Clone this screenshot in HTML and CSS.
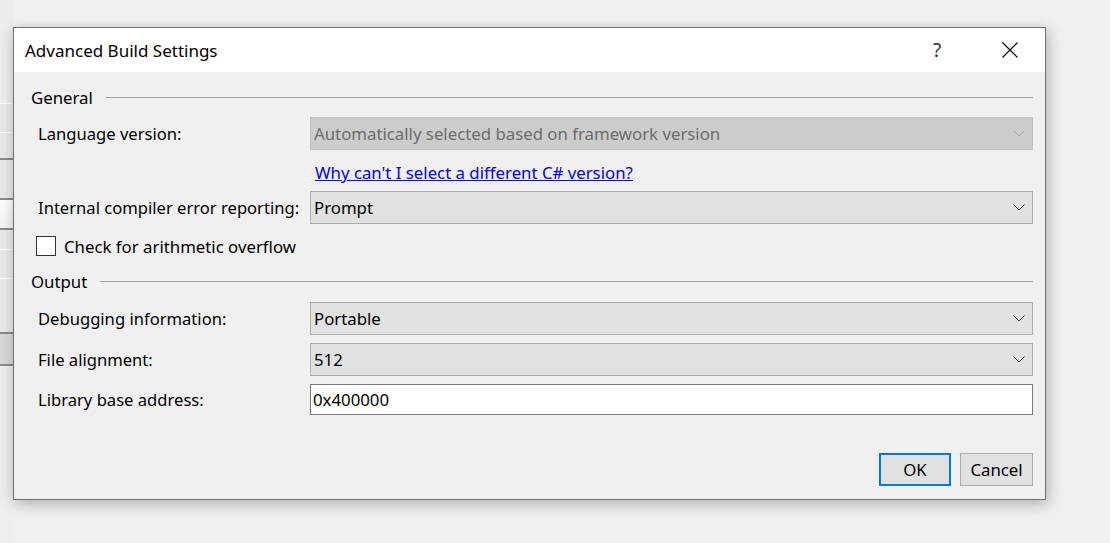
FILE: index.html
```html
<!DOCTYPE html>
<html>
<head>
<meta charset="utf-8">
<link rel="stylesheet" href="styles.css">
</head>
<body>
<div class="app">
  <div class="strip">
    <div class="band b1"></div>
    <div class="band b2 lt"></div>
    <div class="band b3 lt"></div>
    <div class="band b4 dk"></div>
    <div class="band b5 dk"></div>
    <div class="band b6 dk"></div>
    <div class="band b7 lt"></div>
    <div class="band b8 lt"></div>
    <div class="band b9 dk"></div>
    <div class="band b11"></div>
  </div>
</div>

<div class="dialog">
  <div class="titlebar">
    <div class="title">Advanced Build Settings</div>
    <div class="help">?</div>
    <div class="close">
      <svg width="16" height="16" viewBox="0 0 16 16"><path d="M0.5 0.5 L15.5 15.5 M15.5 0.5 L0.5 15.5" stroke="#000" stroke-width="1.1" fill="none"/></svg>
    </div>
  </div>
  <div class="body">
    <div class="group g1"><span class="group-label">General</span><span class="rule"></span></div>

    <div class="row r-lang">
      <div class="label">Language version:</div>
      <div class="combo disabled">
        <span class="combo-text">Automatically selected based on framework version</span>
        <svg class="chev" width="12" height="7" viewBox="0 0 12 7"><path d="M0.5 0.5 L6 6 L11.5 0.5" stroke="#a8a8a8" stroke-width="1" fill="none"/></svg>
      </div>
    </div>

    <div class="row r-link">
      <div class="label"></div>
      <a class="link" href="#">Why can't I select a different C# version?</a>
    </div>

    <div class="row r-ice">
      <div class="label">Internal compiler error reporting:</div>
      <div class="combo">
        <span class="combo-text">Prompt</span>
        <svg class="chev" width="12" height="7" viewBox="0 0 12 7"><path d="M0.5 0.5 L6 6 L11.5 0.5" stroke="#3c3c3c" stroke-width="1" fill="none"/></svg>
      </div>
    </div>

    <div class="check-row">
      <span class="box"></span>
      <span class="check-label">Check for arithmetic overflow</span>
    </div>

    <div class="group g2"><span class="group-label">Output</span><span class="rule"></span></div>

    <div class="row r-debug">
      <div class="label">Debugging information:</div>
      <div class="combo">
        <span class="combo-text">Portable</span>
        <svg class="chev" width="12" height="7" viewBox="0 0 12 7"><path d="M0.5 0.5 L6 6 L11.5 0.5" stroke="#3c3c3c" stroke-width="1" fill="none"/></svg>
      </div>
    </div>

    <div class="row r-file">
      <div class="label">File alignment:</div>
      <div class="combo">
        <span class="combo-text">512</span>
        <svg class="chev" width="12" height="7" viewBox="0 0 12 7"><path d="M0.5 0.5 L6 6 L11.5 0.5" stroke="#3c3c3c" stroke-width="1" fill="none"/></svg>
      </div>
    </div>

    <div class="row r-lib">
      <div class="label">Library base address:</div>
      <div class="textbox">0x400000</div>
    </div>

    <div class="buttons">
      <button class="btn ok">OK</button>
      <button class="btn cancel">Cancel</button>
    </div>
  </div>
</div>
</body>
</html>
```

FILE: styles.css
```css
html, body {
  margin: 0;
  padding: 0;
}
body {
  width: 1110px;
  height: 543px;
  overflow: hidden;
  background: #f0f0f0;
  font-family: "Noto Sans", "Open Sans", "DejaVu Sans", sans-serif;
  font-size: 16.8px;
  color: #000;
  position: relative;
}

/* background application behind the dialog */
.app {
  display: flex;
  height: 543px;
}
.strip {
  width: 13px;
  display: flex;
  flex-direction: column;
}
.band { background: #e9e9e9; }
.band.lt { border-top: 1px solid #fbfbfb; }
.band.dk { border-top: 2px solid #8a8a8a; }
.b1 { height: 103px; background: #ededed; }
.b2 { height: 28px; }
.b3 { height: 25px; }
.b4 { height: 38px; }
.b5 { height: 28px; background: linear-gradient(#fdfdfd, #f3f3f3); }
.b6 { height: 19px; }
.b7 { height: 28px; }
.b8 { height: 53px; }
.b9 { height: 30px; background: #d9d9d9; }
.b11 { flex: 1; border-top: 2px solid #8a8a8a; background: #eeeeee; }

/* dialog */
.dialog {
  position: absolute;
  left: 13px;
  top: 27px;
  width: 1031px;
  height: 471px;
  border: 1px solid #707070;
  background: #f0f0f0;
  box-shadow: 2px 4px 14px rgba(0, 0, 0, 0.28);
  display: flex;
  flex-direction: column;
}
.titlebar {
  height: 44px;
  background: #ffffff;
  display: flex;
  align-items: center;
  padding-left: 11px;
}
.title {
  flex: 1;
  font-size: 17px;
  padding-top: 1px;
}
.help {
  width: 20px;
  font-size: 19px;
  color: #2a2a2a;
  text-align: center;
  margin-right: 55px;
  padding-bottom: 1px;
}
.close {
  width: 16px;
  height: 16px;
  margin-right: 27px;
  display: flex;
}

.body {
  flex: 1;
  display: flex;
  flex-direction: column;
  padding: 0 12px 13px 17px;
}

.group {
  height: 20px;
  display: flex;
  align-items: center;
}
.g1 { margin-top: 15px; }
.g2 { margin-top: 15px; }
.group-label {
  margin-right: 13px;
}
.rule {
  flex: 1;
  height: 1px;
  background: #a0a0a0;
}

.row {
  display: flex;
  align-items: center;
}
.label {
  width: 279px;
  box-sizing: border-box;
  padding-left: 7px;
  flex-shrink: 0;
  white-space: nowrap;
  font-size: 16.6px;
}
.r-lang { margin-top: 10px; height: 33px; }
.r-link { margin-top: 10px; height: 24px; margin-bottom: 7px; }
.r-ice { height: 33px; }
.r-debug { margin-top: 11px; height: 33px; }
.r-file { margin-top: 8px; height: 33px; }
.r-lib { margin-top: 8px; height: 31px; }

.combo {
  flex: 1;
  height: 33px;
  box-sizing: border-box;
  border: 1px solid #adadad;
  background: #e1e1e1;
  display: flex;
  align-items: center;
  padding-left: 3px;
  padding-right: 7px;
}
.combo.disabled {
  background: #cccccc;
  border-color: #bfbfbf;
  color: #6d6d6d;
}
.combo-text {
  flex: 1;
  white-space: nowrap;
}
.chev {
  display: block;
}

.link {
  color: #0000ff;
  text-decoration: underline;
  padding-left: 5px;
}

.textbox {
  flex: 1;
  height: 31px;
  box-sizing: border-box;
  border: 1px solid #7a7a7a;
  background: #ffffff;
  display: flex;
  align-items: center;
  padding-left: 2px;
}

.check-row {
  margin-top: 12px;
  height: 20px;
  display: flex;
  align-items: center;
  padding-left: 5px;
}
.box {
  width: 20px;
  height: 20px;
  box-sizing: border-box;
  border: 1px solid #333333;
  background: #ffffff;
  margin-right: 8px;
}

.buttons {
  margin-top: 38px;
  height: 33px;
  display: flex;
  justify-content: flex-end;
  gap: 9px;
}
.btn {
  font-family: inherit;
  font-size: 16.8px;
  color: #000;
  background: #e1e1e1;
  height: 33px;
  box-sizing: border-box;
  padding: 0;
  margin: 0;
}
.ok {
  width: 72px;
  border: 2px solid #0078d7;
}
.cancel {
  width: 73px;
  border: 1px solid #adadad;
}
```
